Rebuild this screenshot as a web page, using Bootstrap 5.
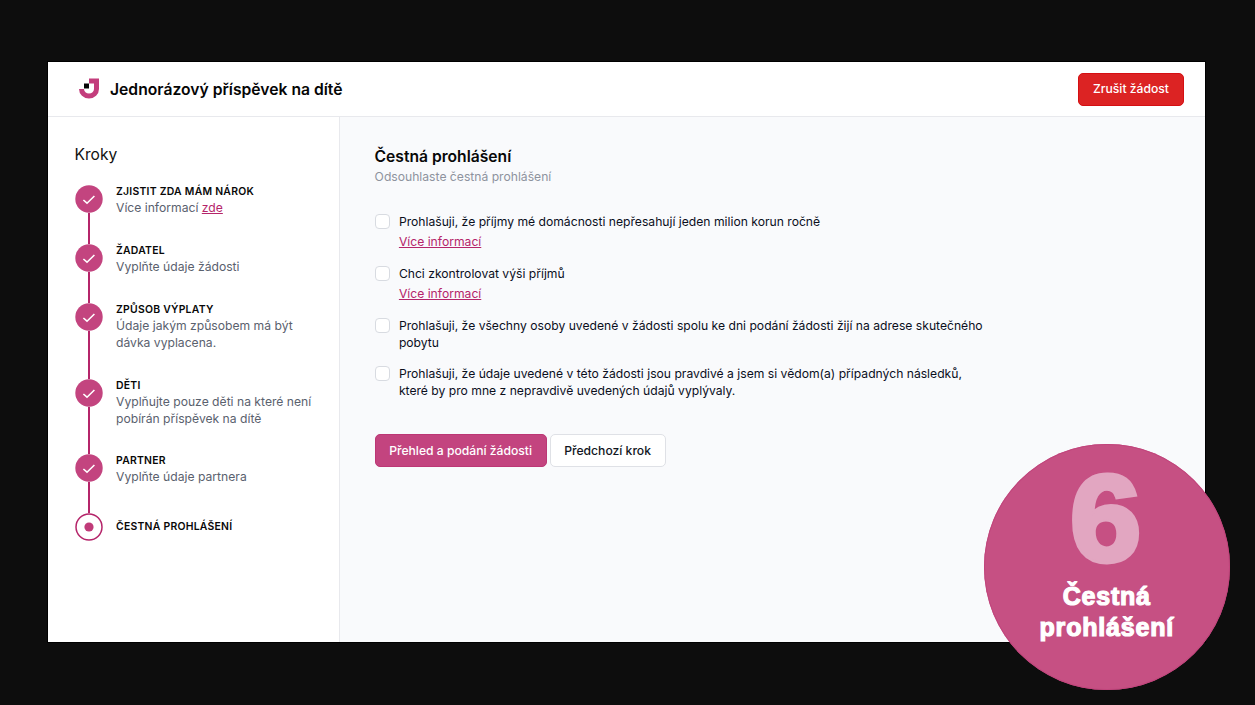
<!DOCTYPE html>
<html lang="cs">
<head>
<meta charset="utf-8">
<meta name="viewport" content="width=device-width, initial-scale=1">
<title>Jednorázový příspěvek na dítě</title>
<link href="https://cdn.jsdelivr.net/npm/bootstrap@5.3.0/dist/css/bootstrap.min.css" rel="stylesheet">
<style>
:root{--pink:#c3447f;--line:#b5256a;--ink:#0b0f1c}
body{background:#0d0d0d;font-family:Inter,"Liberation Sans",sans-serif;font-size:12.15px;line-height:17.3px;color:var(--ink);height:705px;overflow:hidden;padding:62px 50px 0 48px}
.app-window{height:580px;background:#f9fafc;box-shadow:0 0 0 1px #000}
.app-header{height:55px;border-bottom:1px solid #e8e9ed;padding:0 21px 0 30px}
.app-title{font-size:15.7px;font-weight:600;line-height:20px;color:#050505;margin:1px 0 0 10px}
.app-btn{--bs-btn-font-size:12.15px;--bs-btn-font-weight:500;--bs-btn-line-height:17.3px;--bs-btn-padding-y:0;--bs-btn-padding-x:0;--bs-btn-border-radius:5px;height:33px;white-space:nowrap}
.btn-cancel{--bs-btn-bg:#dc2323;--bs-btn-color:#fff;--bs-btn-border-color:#d50f12;width:106px}
.btn-next{--bs-btn-bg:var(--pink);--bs-btn-color:#fff;--bs-btn-border-color:#bc3775;width:172px}
.btn-prev{--bs-btn-bg:#fff;--bs-btn-color:#101522;--bs-btn-border-color:#dfe1e6;width:116px}
.sidebar{width:292px;border-right:1px solid #e8e9ed;padding:28px 20px 0 26.500px}
.side-title{font-size:15.6px;font-weight:400;line-height:20px;color:#111;margin:0 0 20.300px}
.step{display:flex;gap:13.500px}
.step-rail{width:28px;display:flex;flex-direction:column;align-items:center;flex:none}
.step-dot{width:28px;height:28px;flex:none;display:block}
.step-rail::after{content:"";width:2px;flex:1;background:var(--line)}
.step:last-child .step-rail::after{display:none}
.step-text{height:58.7px;color:#5a616e;white-space:nowrap}
.step-text.tall{height:75.9px}
.step-name{font-size:10.4px;font-weight:600;letter-spacing:.26px;line-height:14px;color:#080808;text-transform:uppercase;margin:0}
.step.current .step-name{line-height:28px}
.pink-link{color:var(--line);text-decoration:underline}
.content{padding:29px 0 0 34.600px}
.content-title{font-size:15.65px;font-weight:600;line-height:22px;color:#080808;margin:0}
.hint{color:#8e939e;margin:0 0 28px}
.claim{display:flex;gap:9.300px;white-space:nowrap;padding-bottom:13.700px}
.claim.with-link{padding-bottom:14.900px}
.claim .form-check-input{width:15px;height:15px;margin:1px 0 0;border:1px solid #d8dbe1;border-radius:4px;background:#fff;flex:none}
.claim a{display:block;width:max-content;margin-top:2.3px}
.actions{gap:3px;margin-top:20.500px}
.round-badge{position:absolute;left:984px;top:444px;width:245.5px;height:245.5px;border-radius:50%;background:#c65083;color:#fff;font-family:"Liberation Sans",sans-serif;font-weight:700;text-align:center;box-shadow:inset 0 0 0 1px #c1457c}
.badge-num{font-size:123px;line-height:105px;color:#e2a6c1;-webkit-text-stroke:5px #e2a6c1;paint-order:stroke;margin-top:21.500px;padding-right:2px;transform:scaleX(1.04)}
.badge-label{font-size:25px;line-height:31px;-webkit-text-stroke:1.200px #fff;letter-spacing:.8px;margin-top:10.500px}
</style>
</head>
<body>
<div class="app-window d-flex flex-column">
  <header class="app-header bg-white d-flex align-items-center">
    <svg width="22" height="22" viewBox="0 0 22 22" aria-hidden="true"><path d="M11 .5h10V11a10 9.500 0 0 1-20 0h5a5 4.500 0 0 0 10 0V5.500h-5z" fill="#c33d7c"/><path d="M6 5.500h5v5H6z" fill="#060606"/></svg>
    <h1 class="app-title">Jednorázový příspěvek na dítě</h1>
    <button class="btn app-btn btn-cancel ms-auto" type="button">Zrušit žádost</button>
  </header>
  <div class="d-flex flex-grow-1">
    <aside class="sidebar bg-white flex-shrink-0">
      <h2 class="side-title">Kroky</h2>
      <div class="step"><div class="step-rail"><svg class="step-dot" viewBox="0 0 28 28"><circle cx="14" cy="14" r="13.700" fill="#c3447f"/><path d="M8.400 15l3.600 3.200 7.400-7.200" fill="none" stroke="#fff" stroke-width="1.600"/></svg></div><div class="step-text"><h3 class="step-name">Zjistit zda mám nárok</h3>Více informací <a class="pink-link" href="#">zde</a></div></div>
      <div class="step"><div class="step-rail"><svg class="step-dot" viewBox="0 0 28 28"><circle cx="14" cy="14" r="13.700" fill="#c3447f"/><path d="M8.400 15l3.600 3.200 7.400-7.200" fill="none" stroke="#fff" stroke-width="1.600"/></svg></div><div class="step-text"><h3 class="step-name">Žadatel</h3>Vyplňte údaje žádosti</div></div>
      <div class="step"><div class="step-rail"><svg class="step-dot" viewBox="0 0 28 28"><circle cx="14" cy="14" r="13.700" fill="#c3447f"/><path d="M8.400 15l3.600 3.200 7.400-7.200" fill="none" stroke="#fff" stroke-width="1.600"/></svg></div><div class="step-text tall"><h3 class="step-name">Způsob výplaty</h3>Údaje jakým způsobem má být<br>dávka vyplacena.</div></div>
      <div class="step"><div class="step-rail"><svg class="step-dot" viewBox="0 0 28 28"><circle cx="14" cy="14" r="13.700" fill="#c3447f"/><path d="M8.400 15l3.600 3.200 7.400-7.200" fill="none" stroke="#fff" stroke-width="1.600"/></svg></div><div class="step-text tall"><h3 class="step-name">Děti</h3>Vyplňujte pouze děti na které není<br>pobírán příspěvek na dítě</div></div>
      <div class="step"><div class="step-rail"><svg class="step-dot" viewBox="0 0 28 28"><circle cx="14" cy="14" r="13.700" fill="#c3447f"/><path d="M8.400 15l3.600 3.200 7.400-7.200" fill="none" stroke="#fff" stroke-width="1.600"/></svg></div><div class="step-text"><h3 class="step-name">Partner</h3>Vyplňte údaje partnera</div></div>
      <div class="step current"><div class="step-rail"><svg class="step-dot" viewBox="0 0 28 28"><circle cx="14" cy="14" r="13" fill="#fff" stroke="#b5256a" stroke-width="1.500"/><circle cx="14" cy="14" r="4.600" fill="#c03b79"/></svg></div><div class="step-text"><h3 class="step-name">Čestná prohlášení</h3></div></div>
    </aside>
    <main class="content">
      <h2 class="content-title">Čestná prohlášení</h2>
      <p class="hint">Odsouhlaste čestná prohlášení</p>
      <div class="claims d-flex flex-column">
        <div class="claim with-link"><input class="form-check-input" type="checkbox" aria-label="Příjmy"><div>Prohlašuji, že příjmy mé domácnosti nepřesahují jeden milion korun ročně<a class="pink-link" href="#">Více informací</a></div></div>
        <div class="claim with-link"><input class="form-check-input" type="checkbox" aria-label="Kontrola"><div>Chci zkontrolovat výši příjmů<a class="pink-link" href="#">Více informací</a></div></div>
        <div class="claim"><input class="form-check-input" type="checkbox" aria-label="Adresa"><div>Prohlašuji, že všechny osoby uvedené v žádosti spolu ke dni podání žádosti žijí na adrese skutečného<br>pobytu</div></div>
        <div class="claim"><input class="form-check-input" type="checkbox" aria-label="Pravdivost"><div>Prohlašuji, že údaje uvedené v této žádosti jsou pravdivé a jsem si vědom(a) případných následků,<br>které by pro mne z nepravdivě uvedených údajů vyplývaly.</div></div>
      </div>
      <div class="actions d-flex">
        <button class="btn app-btn btn-next" type="button">Přehled a podání žádosti</button>
        <button class="btn app-btn btn-prev" type="button">Předchozí krok</button>
      </div>
    </main>
  </div>
</div>
<div class="round-badge">
  <div class="badge-num">6</div>
  <div class="badge-label">Čestná<br>prohlášení</div>
</div>
<script src="https://cdn.jsdelivr.net/npm/bootstrap@5.3.0/dist/js/bootstrap.bundle.min.js"></script>
</body>
</html>
